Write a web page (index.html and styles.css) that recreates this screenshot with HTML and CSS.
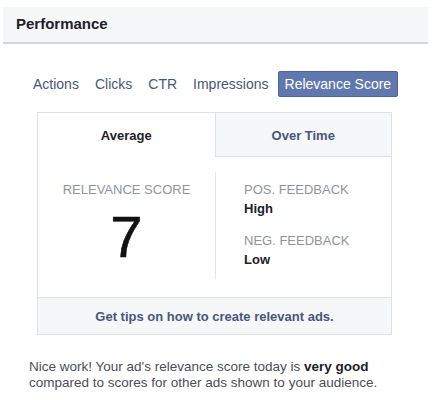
FILE: index.html
```html
<!DOCTYPE html>
<html lang="en">
<head>
    <meta charset="UTF-8">
    <meta name="viewport" content="width=device-width, initial-scale=1.0">
    <title>Performance</title>
    <link rel="stylesheet" href="styles.css">
</head>
<body>
    <div class="panel-header">Performance</div>

    <div class="metric-tabs">
        <span class="metric-tab">Actions</span>
        <span class="metric-tab">Clicks</span>
        <span class="metric-tab">CTR</span>
        <span class="metric-tab">Impressions</span>
        <span class="metric-tab active">Relevance Score</span>
    </div>

    <div class="score-card">
        <div class="card-tabs">
            <div class="card-tab selected">Average</div>
            <div class="card-tab">Over Time</div>
        </div>
        <div class="card-body">
            <div class="score-col">
                <div class="label">RELEVANCE SCORE</div>
                <div class="score">7</div>
            </div>
            <div class="feedback-col">
                <div class="label">POS. FEEDBACK</div>
                <div class="value">High</div>
                <div class="label">NEG. FEEDBACK</div>
                <div class="value">Low</div>
            </div>
        </div>
        <div class="card-footer">Get tips on how to create relevant ads.</div>
    </div>

    <p class="summary">Nice work! Your ad's relevance score today is <b>very good</b> compared to scores for other ads shown to your audience.</p>
</body>
</html>
```

FILE: styles.css
```css
body {
    margin: 0;
    padding: 7px 4px 0 3px;
    font-family: "Liberation Sans", Arial, sans-serif;
    color: #1d2129;
}
.panel-header {
    background-color: #f6f7f9;
    border-bottom: 2px solid #d3d6db;
    padding: 8px 13px 9px;
    font-size: 15px;
    line-height: 18px;
    font-weight: bold;
}
.metric-tabs {
    display: flex;
    gap: 2px;
    margin: 27px 0 0 23px;
}
.metric-tab {
    padding: 4px 7px;
    font-size: 14px;
    line-height: 18px;
    color: #4b5677;
    border-radius: 2px;
}
.metric-tab.active {
    background-color: #6078ae;
    color: #fff;
    padding: 3px 6px;
    border: 1px solid #4d6399;
}
.score-card {
    width: 353px;
    margin: 15px 0 0 34px;
    border: 1px solid #dfe0e4;
}
.card-tabs {
    display: flex;
}
.card-tab {
    width: 50%;
    box-sizing: border-box;
    text-align: center;
    padding: 15px 0 12px;
    font-size: 13px;
    line-height: 16px;
    font-weight: bold;
    color: #4b5677;
    background-color: #f6f7f9;
    border-left: 1px solid #dfe0e4;
    border-bottom: 1px solid #dfe0e4;
}
.card-tab.selected {
    color: #1d2129;
    background-color: #fff;
    border-left: none;
    border-bottom-color: #fff;
}
.card-body {
    display: flex;
    padding: 15px 0 18px;
}
.label {
    font-size: 13px;
    line-height: 16px;
    color: #90949c;
}
.score-col {
    width: 177px;
    text-align: center;
    padding-top: 10px;
}
.score {
    font-size: 58px;
    line-height: 58px;
    margin-top: 10px;
    color: #111;
    -webkit-text-stroke: 0.6px #111;
}
.feedback-col {
    flex: 1;
    border-left: 1px solid #e5e6e9;
    padding: 10px 0 11px 28px;
}
.value {
    font-size: 13px;
    line-height: 16px;
    font-weight: bold;
    margin-top: 3px;
}
.value + .label {
    margin-top: 16px;
}
.card-footer {
    border-top: 1px solid #dfe0e4;
    background-color: #f6f7f9;
    text-align: center;
    padding: 11px 0 9px;
    font-size: 13px;
    line-height: 16px;
    font-weight: bold;
    color: #4b5677;
}
.summary {
    margin: 24px 0 0 26px;
    font-size: 13.5px;
    line-height: 16px;
    color: #4b4f56;
}
.summary b {
    color: #1d2129;
}
```
